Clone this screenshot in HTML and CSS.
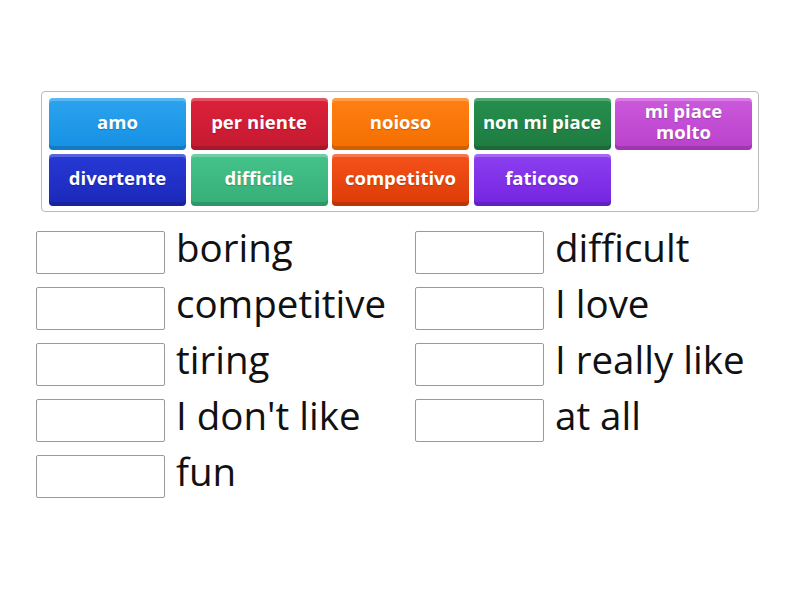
FILE: index.html
```html
<!DOCTYPE html>
<html>
<head>
<meta charset="utf-8">
<link rel="stylesheet" href="styles.css">
</head>
<body>
<div class="bank">
  <div class="tile c-blue">amo</div>
  <div class="tile c-red">per niente</div>
  <div class="tile c-orange">noioso</div>
  <div class="tile c-green">non mi piace</div>
  <div class="tile c-pink">mi piace<br>molto</div>
  <div class="tile c-navy">divertente</div>
  <div class="tile c-mint">difficile</div>
  <div class="tile c-vermil">competitivo</div>
  <div class="tile c-violet">faticoso</div>
</div>
<div class="answers">
  <div class="row"><div class="slot"></div><span class="word">boring</span></div>
  <div class="row"><div class="slot"></div><span class="word">competitive</span></div>
  <div class="row"><div class="slot"></div><span class="word">tiring</span></div>
  <div class="row"><div class="slot"></div><span class="word">I don't like</span></div>
  <div class="row"><div class="slot"></div><span class="word">fun</span></div>
  <div class="row"><div class="slot"></div><span class="word">difficult</span></div>
  <div class="row"><div class="slot"></div><span class="word">I love</span></div>
  <div class="row"><div class="slot"></div><span class="word">I really like</span></div>
  <div class="row"><div class="slot"></div><span class="word">at all</span></div>
</div>
</body>
</html>
```
FILE: styles.css
```css
html, body {
  margin: 0;
  padding: 0;
  background: #fff;
  font-family: "Open Sans", "Liberation Sans", sans-serif;
}
.bank {
  box-sizing: border-box;
  width: 718px;
  margin: 91px 0 0 41px;
  border: 1px solid #b9b9b9;
  border-radius: 4px;
  padding: 6px 6px 5px 7px;
  display: grid;
  grid-template-columns: repeat(5, 137px);
  grid-auto-rows: 52px;
  column-gap: 4.5px;
  row-gap: 4px;
}
.tile {
  box-sizing: border-box;
  padding-bottom: 6px;
  border-radius: 4px;
  color: #fff;
  font-weight: 700;
  font-size: 18.5px;
  line-height: 21px;
  display: flex;
  align-items: center;
  justify-content: center;
  text-align: center;
  text-shadow: 0 1px 1px rgba(0,0,0,0.2);
  box-shadow: inset 0 3px 0 rgba(255,255,255,0.22), inset 0 -4px 0 rgba(0,0,0,0.14);
}
.c-blue { background: linear-gradient(#2ca3ee, #1590e3); }
.c-red { background: linear-gradient(#dc2139, #c41a31); }
.c-orange { background: linear-gradient(#ff8014, #f46e00); }
.c-green { background: linear-gradient(#258f4c, #1f7b41); }
.c-pink { background: linear-gradient(#cc59dc, #b941cb); }
.c-navy { background: linear-gradient(#2739d6, #1b28b8); }
.c-mint { background: linear-gradient(#45c38a, #36ae77); }
.c-vermil { background: linear-gradient(#f5521b, #dc3b06); }
.c-violet { background: linear-gradient(#8c3ff0, #7424e0); }

.answers {
  margin: 19px 0 0 36px;
  display: grid;
  grid-template-columns: 379px 379px;
  grid-template-rows: repeat(5, 43px);
  grid-auto-flow: column;
  row-gap: 13px;
}
.row {
  display: flex;
  align-items: flex-start;
  gap: 11px;
}
.slot {
  box-sizing: border-box;
  width: 129px;
  height: 43px;
  flex: none;
  border: 1px solid #9a9a9a;
  border-radius: 2px;
  background: #fff;
}
.word {
  font-size: 38.5px;
  line-height: 39px;
  margin-top: -3px;
  color: #111;
  white-space: nowrap;
}
```
